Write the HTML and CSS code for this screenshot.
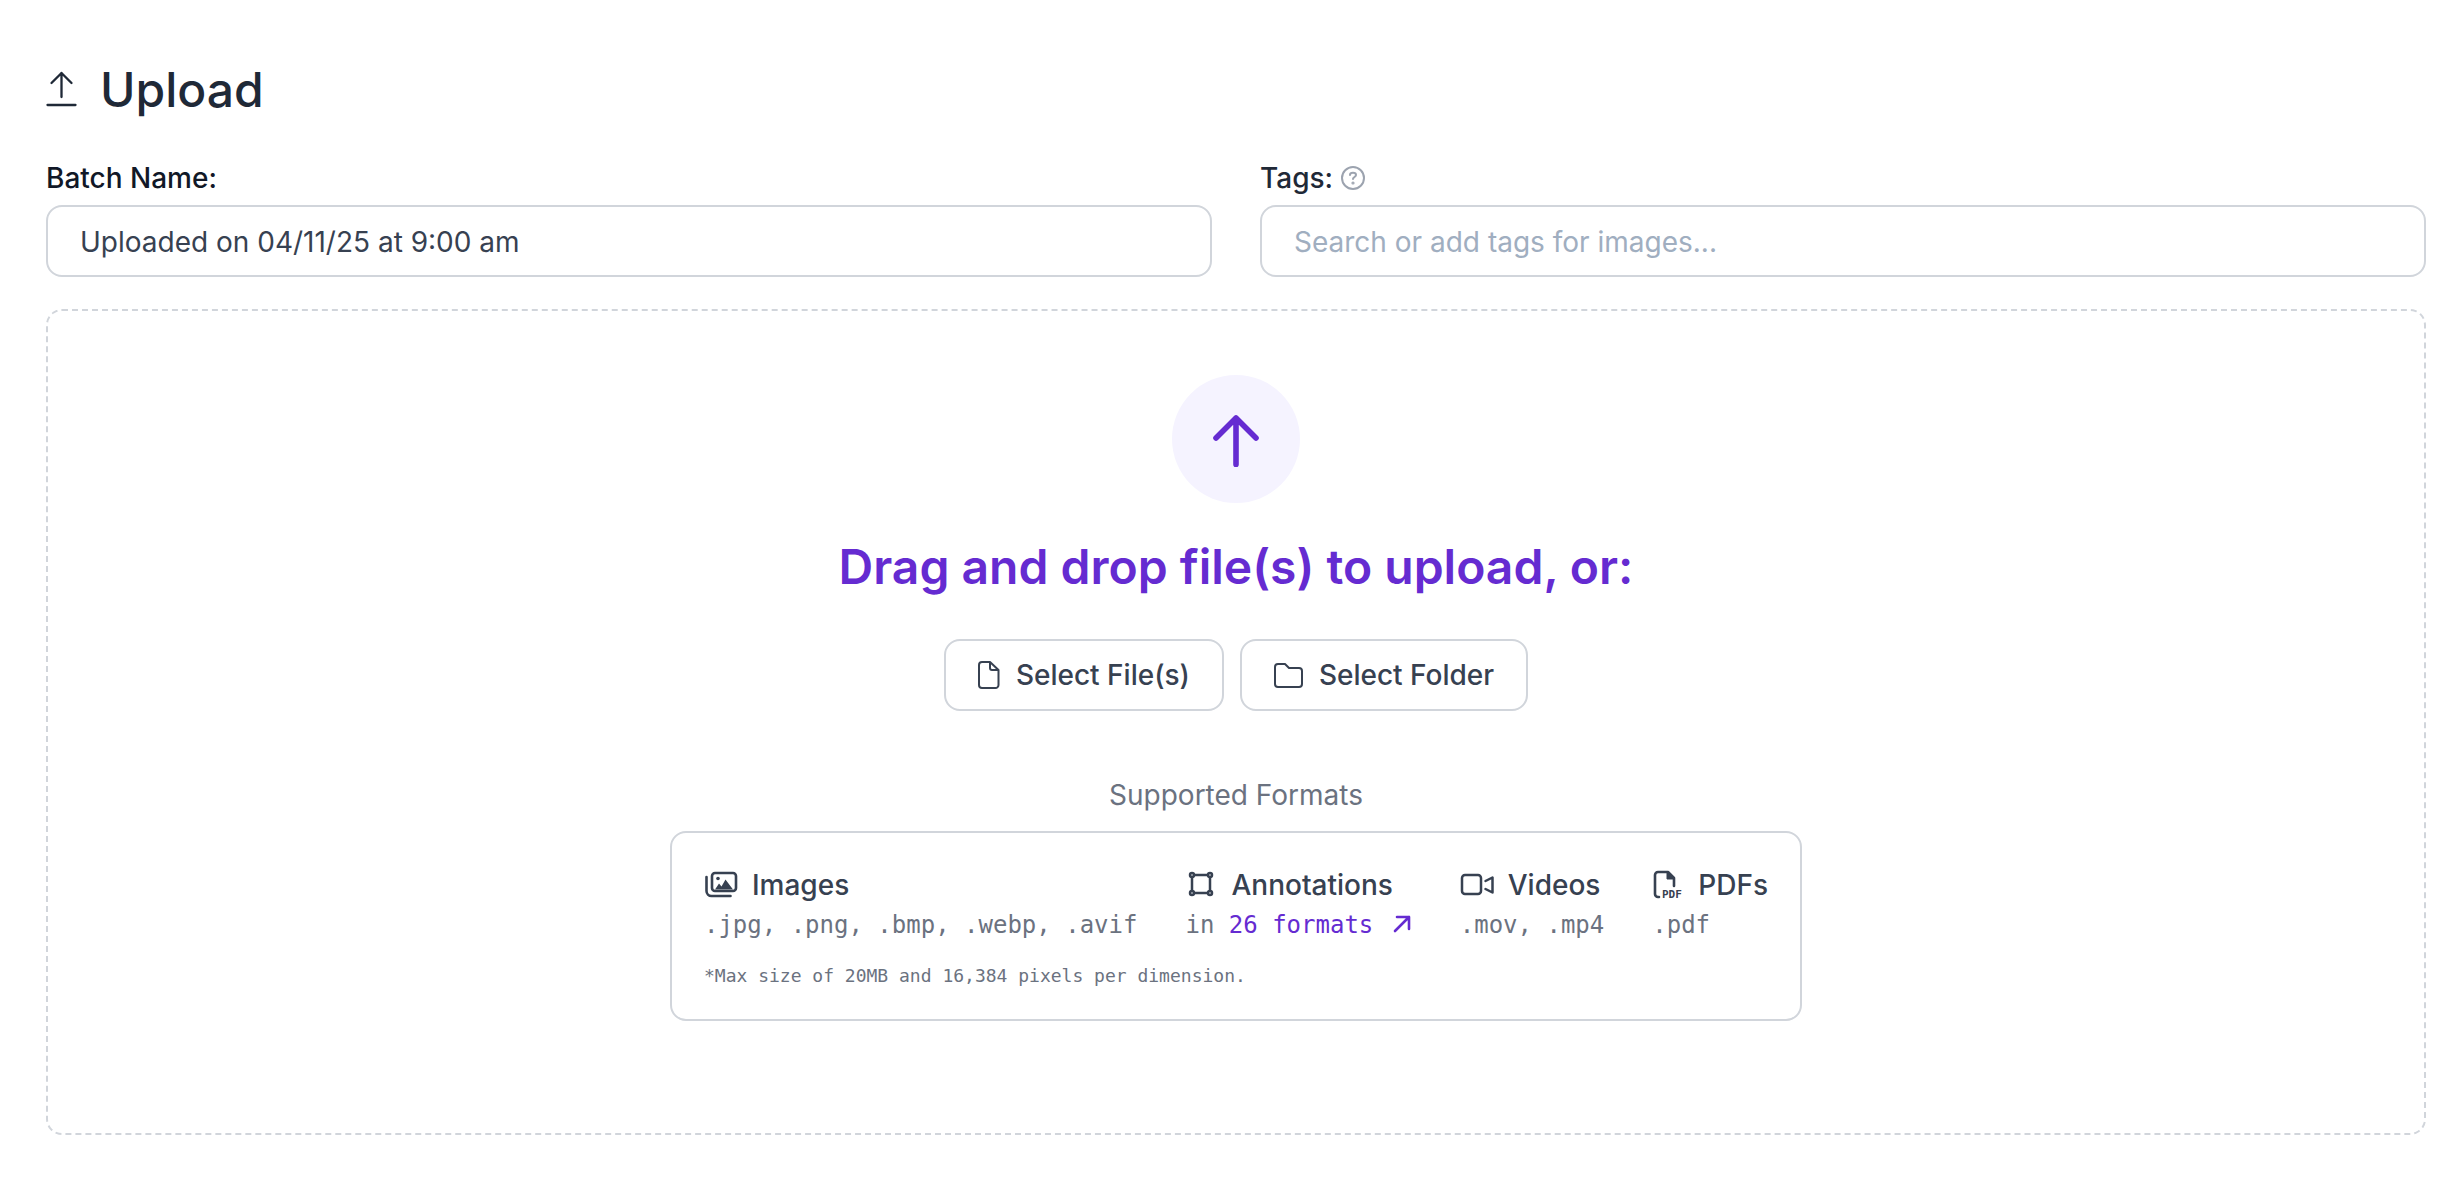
FILE: index.html
```html
<!DOCTYPE html>
<html lang="en">
<head>
<meta charset="utf-8">
<meta name="viewport" content="width=device-width, initial-scale=1">
<title>Upload</title>
<link rel="stylesheet" href="styles.css">
</head>
<body>
<main class="page">
  <header class="page-header">
    <svg class="icon" width="32" height="40" viewBox="0 0 32 40" fill="none" stroke="currentColor" stroke-width="2.3" stroke-linecap="round" stroke-linejoin="round" aria-hidden="true"><path d="M15.500 27V3M5.500 13l10-10 10 10M1.500 35h28"/></svg>
    <h1 class="page-title">Upload</h1>
  </header>

  <form class="fields">
    <div class="field">
      <div class="label-row"><label class="label label-strong" for="batch">Batch Name:</label></div>
      <input class="input" id="batch" type="text" value="Uploaded on 04/11/25 at 9:00 am">
    </div>
    <div class="field">
      <div class="label-row">
        <label class="label" for="tags">Tags:</label>
        <svg class="icon help" width="24" height="24" viewBox="0 0 24 24" fill="none" stroke="currentColor" stroke-width="2" stroke-linecap="round" stroke-linejoin="round" aria-hidden="true"><circle cx="12" cy="12" r="11"/><path d="M9 9c0-3 6-3 6 0 0 2-3 2-3 4"/><circle cx="12" cy="17" r=".6"/></svg>
      </div>
      <input class="input" id="tags" type="text" placeholder="Search or add tags for images...">
    </div>
  </form>

  <section class="dropzone">
    <div class="badge">
      <svg class="icon" width="48" height="56" viewBox="0 0 48 56" fill="none" stroke="currentColor" stroke-width="5.600" stroke-linecap="round" stroke-linejoin="round" aria-hidden="true"><path d="M24 53.500V7M4 27L24 7l20 20"/></svg>
    </div>
    <h2 class="drop-title">Drag and drop file(s) to upload, or:</h2>
    <div class="actions">
      <button class="button" type="button">
        <svg class="icon" width="22" height="30" viewBox="0 0 22 30" fill="none" stroke="currentColor" stroke-width="2" stroke-linejoin="round" aria-hidden="true"><path d="M4 2h8l8.500 8v15a3 3 0 0 1-3 3H4a3 3 0 0 1-3-3V5a3 3 0 0 1 3-3zM12 2v6a2 2 0 0 0 2 2h6.500"/></svg>
        Select File(s)
      </button>
      <button class="button" type="button">
        <svg class="icon" width="29" height="30" viewBox="0 0 29 30" fill="none" stroke="currentColor" stroke-width="2" stroke-linejoin="round" aria-hidden="true"><path d="M4 4h7l4 4h10a3 3 0 0 1 3 3v13a3 3 0 0 1-3 3H4a3 3 0 0 1-3-3V7a3 3 0 0 1 3-3z"/></svg>
        Select Folder
      </button>
    </div>

    <p class="formats-title">Supported Formats</p>
    <div class="formats">
      <div class="format-list">
        <div class="format">
          <h3 class="format-name"><svg class="icon" width="34" height="32" viewBox="0 0 34 32" fill="none" stroke="currentColor" stroke-width="2.600" stroke-linecap="round" stroke-linejoin="round" aria-hidden="true"><rect x="8" y="4" width="24" height="18" rx="3"/><path d="M2.500 8v14a5 5 0 0 0 5 5h19"/><path stroke="none" fill="currentColor" d="M11 20.500l4-6 2.500 3 4-7 7.500 10z"/><circle cx="14" cy="9.500" r="1.800" stroke="none" fill="currentColor"/></svg>Images</h3>
          <p class="format-types">.jpg, .png, .bmp, .webp, .avif</p>
        </div>
        <div class="format">
          <h3 class="format-name"><svg class="icon" width="32" height="32" viewBox="0 0 32 32" fill="none" stroke="currentColor" stroke-width="2.500" aria-hidden="true"><path d="M9 6h14M9 24h14M7 8v14M25 8v14"/><circle cx="7" cy="6" r="2"/><circle cx="25" cy="6" r="2"/><circle cx="7" cy="24" r="2"/><circle cx="25" cy="24" r="2"/></svg>Annotations</h3>
          <p class="format-types">in <a class="link" href="#formats">26 formats <svg class="icon" width="24" height="18" viewBox="0 0 24 18" fill="none" stroke="currentColor" stroke-width="2.600" stroke-linecap="round" stroke-linejoin="round" aria-hidden="true"><path d="M7 16L21 2M9 2h12v12"/></svg></a></p>
        </div>
        <div class="format">
          <h3 class="format-name"><svg class="icon" width="34" height="32" viewBox="0 0 34 32" fill="none" stroke="currentColor" stroke-width="2.500" stroke-linejoin="round" stroke-linecap="round" aria-hidden="true"><rect x="2" y="6" width="19" height="19" rx="3"/><path d="M25.500 12l7-3.500v15l-7-3.500"/></svg>Videos</h3>
          <p class="format-types">.mov, .mp4</p>
        </div>
        <div class="format">
          <h3 class="format-name"><svg class="icon" width="32" height="32" viewBox="0 0 32 32" fill="none" stroke="currentColor" stroke-width="2.600" stroke-linecap="round" stroke-linejoin="round" aria-hidden="true"><path d="M7 28H6a3 3 0 0 1-3-3V6a3 3 0 0 1 3-3h10l6 6v8"/><path fill="currentColor" stroke-width="1" d="M15 3v7h7z"/><text class="icon-text" x="10" y="29">PDF</text></svg>PDFs</h3>
          <p class="format-types">.pdf</p>
        </div>
      </div>
      <p class="format-note">*Max size of 20MB and 16,384 pixels per dimension.</p>
    </div>
  </section>
</main>
</body>
</html>
```
FILE: styles.css
```css
* { box-sizing: border-box; }

body {
  margin: 0;
  background: #fff;
  color: #374151;
  font: 400 28px/40px Inter, "Liberation Sans", sans-serif;
}

h1, h2, h3, p { margin: 0; font-size: inherit; font-weight: inherit; }

.icon { flex: none; display: block; }

.page { padding: 62px 38px 40px 46px; }

.page-header {
  display: flex;
  align-items: center;
  gap: 22px;
  margin-bottom: 40px;
  color: #1f2937;
}

.page-title { font-size: 48px; line-height: 56px; font-weight: 500; }

.fields {
  display: grid;
  grid-template-columns: 1fr 1fr;
  gap: 48px;
  margin-bottom: 32px;
}

.label-row {
  display: flex;
  align-items: center;
  gap: 8px;
  margin-bottom: 7px;
}

.label { font-weight: 500; color: #1f2937; }
.label-strong { color: #111827; }
.help { color: #9ca3af; }

.input {
  display: block;
  width: 100%;
  height: 72px;
  padding: 2px 32px 0;
  border: 2px solid #d1d5db;
  border-radius: 16px;
  background: #fff;
  color: #374151;
  font: inherit;
}

.input::placeholder { color: #a0aec0; opacity: 1; }

.dropzone {
  display: flex;
  flex-direction: column;
  align-items: center;
  padding: 64px 32px 112px;
  border: 2px dashed #d1d5db;
  border-radius: 16px;
}

.badge {
  display: flex;
  align-items: center;
  justify-content: center;
  width: 128px;
  height: 128px;
  margin-bottom: 32px;
  border-radius: 50%;
  background: #f5f3ff;
  color: #652bd1;
}

.drop-title {
  margin-bottom: 40px;
  color: #652bd1;
  font-size: 48px;
  line-height: 64px;
  font-weight: 600;
}

.actions { display: flex; gap: 16px; margin-bottom: 64px; }

.button {
  display: flex;
  align-items: center;
  gap: 16px;
  height: 72px;
  padding: 0 32px;
  border: 2px solid #d1d5db;
  border-radius: 16px;
  background: #fff;
  color: #374151;
  font: inherit;
  font-weight: 500;
}

.formats-title { margin-bottom: 16px; color: #6b7280; }

.formats {
  padding: 32px;
  border: 2px solid #d1d5db;
  border-radius: 16px;
}

.format-list { display: flex; gap: 48px; margin-bottom: 20px; }

.format-name {
  display: flex;
  align-items: center;
  gap: 14px;
  font-weight: 500;
}

.format-types, .format-note {
  color: #6b7280;
  font-family: "DejaVu Sans Mono", monospace;
}

.format-types { font-size: 24px; }
.format-note { font-size: 18px; line-height: 22px; }

.link { color: #652bd1; text-decoration: none; }
.link .icon { display: inline-block; }

.icon-text {
  fill: currentColor;
  stroke: none;
  font: 700 11px "DejaVu Sans Mono", monospace;
}
```
